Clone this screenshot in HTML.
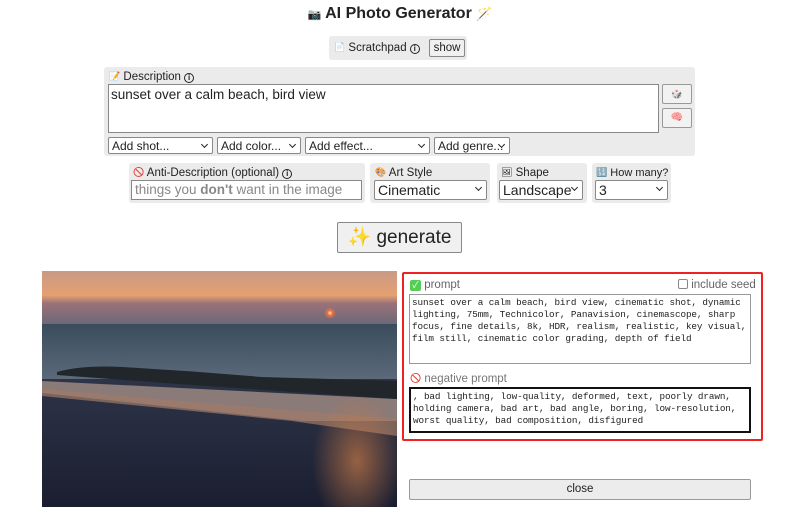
<!DOCTYPE html>
<html><head><meta charset="utf-8"><style>
*{box-sizing:border-box}
body{margin:0;width:800px;height:513px;background:#fff;font-family:"Liberation Sans","Noto Sans CJK SC",sans-serif;position:relative;overflow:hidden;color:#222}
.a{position:absolute}
.box{position:absolute;background:#ebebeb;border-radius:3px}
.sel{position:absolute;background:#fff;border:1px solid #888;border-radius:2px;font-size:12px;padding:1px 3px;height:17px;line-height:14px;white-space:nowrap;overflow:hidden}
.sel:after{content:"";position:absolute;right:5px;top:4px;width:4px;height:4px;border-right:1.5px solid #222;border-bottom:1.5px solid #222;transform:rotate(45deg)}
.big{height:20px;font-size:14px;line-height:17px}
.ta{position:absolute;background:#fff;border:1px solid #999;font-family:"Liberation Mono","DejaVu Sans Mono",monospace;font-size:9.3px;line-height:12px;padding:2px 2px;color:#222;letter-spacing:-0.1px}
.lbl{font-size:11.5px;position:absolute;white-space:nowrap}
.i{display:inline-block;width:10px;height:10px;border:1px solid #222;border-radius:50%;font-size:8px;line-height:8px;text-align:center;font-weight:bold;vertical-align:0px}
.e{font-size:9px;vertical-align:1px}
</style></head><body>
<div class="a" style="left:0;width:800px;top:5px;text-align:center;font-weight:bold;font-size:16px"><span style="font-size:11px">📷</span> AI Photo Generator <span style="font-size:13px">🪄</span></div>
<div class="box" style="left:329px;top:36px;width:138px;height:24px"></div>
<div class="a" style="left:334px;top:42px;font-size:11.5px"><span class="e">📄</span> Scratchpad <span class="i">i</span></div>
<div class="a" style="left:429px;top:39px;width:36px;height:18px;border:1px solid #888;background:#f0f0f0;border-radius:2px;font-size:11.5px;text-align:center;line-height:16px">show</div>

<div class="box" style="left:104px;top:67px;width:591px;height:89px"></div>
<div class="lbl" style="left:109px;top:71px"><span class="e">📝</span> Description <span class="i">i</span></div>
<div class="a" style="left:108px;top:84px;width:551px;height:49px;background:#fff;border:1px solid #888;font-size:13.5px;padding:2px 2px">sunset over a calm beach, bird view</div>
<div class="a" style="left:662px;top:84px;width:30px;height:20px;border:1px solid #999;background:#f2f2f2;border-radius:2px;font-size:9px;text-align:center;line-height:18px">🎲</div>
<div class="a" style="left:662px;top:108px;width:30px;height:20px;border:1px solid #999;background:#f2f2f2;border-radius:2px;font-size:10px;text-align:center;line-height:18px">🧠</div>
<div class="sel" style="left:108px;top:137px;width:105px">Add shot...</div>
<div class="sel" style="left:217px;top:137px;width:84px">Add color...</div>
<div class="sel" style="left:305px;top:137px;width:125px">Add effect...</div>
<div class="sel" style="left:434px;top:137px;width:76px;padding-right:12px">Add genre...</div>

<div class="box" style="left:129px;top:163px;width:236px;height:40px"></div>
<div class="lbl" style="left:133px;top:167px"><span class="e">🚫</span> Anti-Description (optional) <span class="i">i</span></div>
<div class="a" style="left:131px;top:180px;width:231px;height:20px;background:#fff;border:1px solid #888;font-size:13.5px;color:#888;padding:0 3px;line-height:18px">things you <b>don't</b> want in the image</div>
<div class="box" style="left:370px;top:163px;width:120px;height:40px"></div>
<div class="lbl" style="left:375px;top:167px"><span class="e">🎨</span> Art Style</div>
<div class="sel big" style="left:374px;top:180px;width:113px">Cinematic</div>
<div class="box" style="left:497px;top:163px;width:90px;height:40px"></div>
<div class="lbl" style="left:501px;top:167px"><span class="e">🖼</span> Shape</div>
<div class="sel big" style="left:499px;top:180px;width:84px;padding-right:12px">Landscape</div>
<div class="box" style="left:592px;top:163px;width:79px;height:40px"></div>
<div class="lbl" style="left:596px;top:167px;font-size:11px"><span class="e">🔢</span> How many?</div>
<div class="sel big" style="left:595px;top:180px;width:73px">3</div>

<div class="a" style="left:337px;top:222px;width:125px;height:31px;border:1px solid #888;background:#f0f0f0;border-radius:2px;font-size:19px;text-align:center;line-height:29px">✨ generate</div>

<svg class="a" style="left:42px;top:271px" width="355" height="236" viewBox="0 0 355 236">
<defs>
<linearGradient id="sky" x1="0" y1="0" x2="0" y2="1"><stop offset="0" stop-color="#c99a86"/><stop offset=".45" stop-color="#e6a070"/><stop offset=".6" stop-color="#9a7278"/><stop offset="1" stop-color="#6a6878"/></linearGradient>
<linearGradient id="sea" x1="0" y1="0" x2="0" y2="1"><stop offset="0" stop-color="#3a4c5c"/><stop offset="1" stop-color="#5e6c7c"/></linearGradient>
<linearGradient id="low" x1="0" y1="0" x2="0" y2="1"><stop offset="0" stop-color="#2e3448"/><stop offset="1" stop-color="#1a1e30"/></linearGradient>
<radialGradient id="ref" cx=".5" cy=".5" r=".5"><stop offset="0" stop-color="#c87a48" stop-opacity=".7"/><stop offset="1" stop-color="#c87a48" stop-opacity="0"/></radialGradient>
<radialGradient id="sun" cx=".5" cy=".5" r=".5"><stop offset="0" stop-color="#fff0b0"/><stop offset=".4" stop-color="#f07040"/><stop offset="1" stop-color="#f07040" stop-opacity="0"/></radialGradient>
</defs>
<rect width="355" height="54" fill="url(#sky)"/>
<rect y="53" width="355" height="60" fill="url(#sea)"/>
<rect y="108" width="355" height="128" fill="url(#low)"/>
<path d="M0 110 L355 128 L355 150 L260 150 L0 122 Z" fill="#8a7a78"/>
<path d="M0 118 L260 140 L355 148 L355 165 L250 150 L0 125 Z" fill="#a07a68" opacity=".7"/>
<ellipse cx="315" cy="190" rx="45" ry="70" fill="url(#ref)"/>
<path d="M15 101 Q40 94 80 96 Q150 100 220 106 L355 110 L355 128 L150 114 L15 104 Z" fill="#20262a"/>
<circle cx="288" cy="42" r="6" fill="url(#sun)"/>
</svg>

<div class="a" style="left:402px;top:272px;width:361px;height:169px;border:2px solid #e22;border-radius:2px"></div>
<div class="lbl" style="left:410px;top:279px;color:#666"><span style="display:inline-block;width:11px;height:11px;background:#5c5;color:#fff;font-size:9px;line-height:11px;text-align:center;border-radius:2px">✓</span> prompt</div>
<div class="lbl" style="left:678px;top:279px;color:#666"><span style="display:inline-block;width:10px;height:10px;border:1px solid #888;border-radius:2px;vertical-align:-1px"></span> include seed</div>
<div class="ta" style="left:409px;top:294px;width:342px;height:70px">sunset over a calm beach, bird view, cinematic shot, dynamic lighting, 75mm, Technicolor, Panavision, cinemascope, sharp focus, fine details, 8k, HDR, realism, realistic, key visual, film still, cinematic color grading, depth of field</div>
<div class="lbl" style="left:410px;top:373px;color:#777"><span class="e">🚫</span> negative prompt</div>
<div class="ta" style="left:409px;top:387px;width:342px;height:46px;border:2px solid #111">, bad lighting, low-quality, deformed, text, poorly drawn, holding camera, bad art, bad angle, boring, low-resolution, worst quality, bad composition, disfigured</div>
<div class="a" style="left:409px;top:479px;width:342px;height:21px;border:1px solid #999;background:#ececec;border-radius:2px;font-size:11.5px;text-align:center;line-height:19px">close</div>
</body></html>
